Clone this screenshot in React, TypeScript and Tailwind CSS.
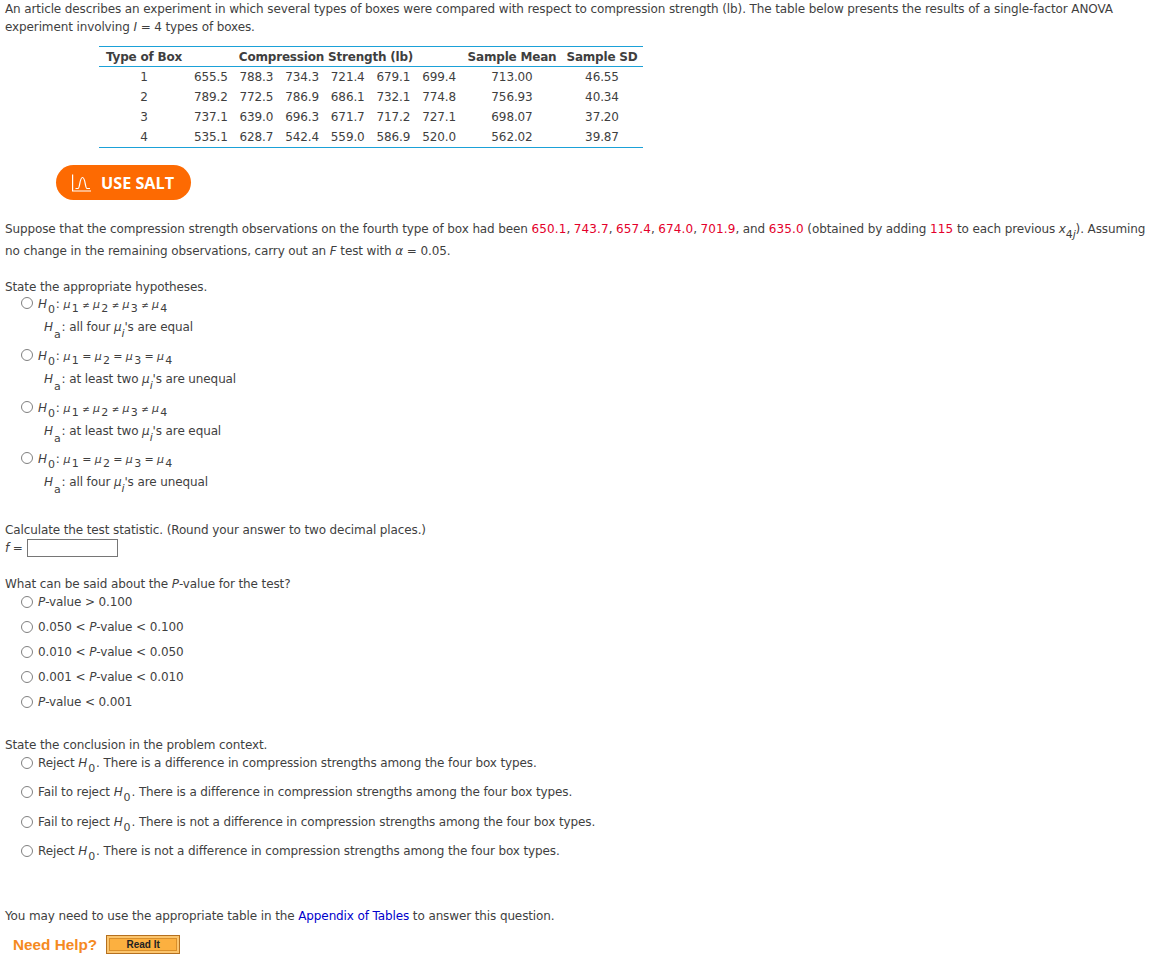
import React from 'react';

const rows = [
  ['1', '655.5', '788.3', '734.3', '721.4', '679.1', '699.4', '713.00', '46.55'],
  ['2', '789.2', '772.5', '786.9', '686.1', '732.1', '774.8', '756.93', '40.34'],
  ['3', '737.1', '639.0', '696.3', '671.7', '717.2', '727.1', '698.07', '37.20'],
  ['4', '535.1', '628.7', '542.4', '559.0', '586.9', '520.0', '562.02', '39.87'],
];

const Sub: React.FC<{ children: React.ReactNode }> = ({ children }) => (
  <sub className="text-[11px] not-italic bottom-[-5px]">{children}</sub>
);

const Radio: React.FC = () => (
  <span className="inline-block w-[12px] h-[12px] mr-[5px] shrink-0 rounded-full border border-[#808080] bg-white" />
);

const H0 = () => (
  <>
    <i>H</i>
    <sub className="text-[11px] bottom-[-5px] ml-[1px] mr-[1px]">0</sub>
  </>
);

const Mu: React.FC<{ n: string }> = ({ n }) => (
  <span className="text-[11px]">
    <i>μ</i>
    <sub className="text-[11px] bottom-[-4px] ml-[1.5px]">{n}</sub>
  </span>
);

const Op: React.FC<{ op: string }> = ({ op }) => (
  <span className="text-[11px]">
    {' '}
    <span className={op === '≠' ? 'text-[9px]' : 'text-[11px]'}>{op}</span>{' '}
  </span>
);

const Hypothesis: React.FC<{ op: string; alt: string; className?: string }> = ({ op, alt, className }) => (
  <div className={className}>
    <div className="flex items-center h-[18px] -mt-[2px] pl-[21px]">
      <Radio />
      <span className="whitespace-pre pt-[2px]">
        <H0 />: <Mu n="1" />
        <Op op={op} />
        <Mu n="2" />
        <Op op={op} />
        <Mu n="3" />
        <Op op={op} />
        <Mu n="4" />
      </span>
    </div>
    <div className="h-[18px] mt-[6px] pl-[44px] leading-[18px] whitespace-pre">
      <i>H</i>
      <sub className="text-[11px] bottom-[-7px] ml-[1px] mr-[1px]">a</sub>: {alt.split('|')[0]}
      <i>μ</i>
      <sub className="text-[11px] bottom-[-6px]">
        <i>i</i>
      </sub>
      {alt.split('|')[1]}
    </div>
  </div>
);

const Option: React.FC<{ children: React.ReactNode; className?: string }> = ({ children, className }) => (
  <div className={`flex items-center h-[18px] pl-[21px] whitespace-pre ${className ?? ''}`}>
    <Radio />
    <span>{children}</span>
  </div>
);

const Red: React.FC<{ children: React.ReactNode }> = ({ children }) => (
  <span className="text-[#e4002b] tracking-[0.1px]">{children}</span>
);

export default function App() {
  return (
    <div className="w-[1152px] h-[963px] overflow-hidden bg-white text-[#3f3f3f] text-[12px] tracking-[-0.115px] leading-[18px] font-['DejaVu_Sans',Verdana,sans-serif]">
      <div className="pl-[5px] pr-[30px]">
        <p className="whitespace-pre">An article describes an experiment in which several types of boxes were compared with respect to compression strength (lb). The table below presents the results of a single-factor ANOVA</p>
        <p className="whitespace-pre">experiment involving <i>I</i> = 4 types of boxes.</p>
      </div>

      <table className="ml-[99px] mt-[10px] w-[544px] table-fixed whitespace-nowrap border-y border-[#1ba1d8] border-separate border-spacing-0">
        <thead>
          <tr className="h-[20px]">
            <th className="w-[90px] text-center font-bold tracking-[-0.2px] border-b border-[#1ba1d8]">Type of Box</th>
            <th colSpan={6} className="w-[274px] text-center font-bold tracking-[-0.2px] border-b border-[#1ba1d8]">Compression Strength (lb)</th>
            <th className="w-[98px] text-center font-bold tracking-[-0.2px] border-b border-[#1ba1d8]">Sample Mean</th>
            <th className="w-[82px] text-center font-bold tracking-[-0.2px] border-b border-[#1ba1d8]">Sample SD</th>
          </tr>
        </thead>
        <tbody>
          {rows.map((r) => (
            <tr key={r[0]} className="h-[20px]">
              {r.map((c, i) => (
                <td key={i} className={i >= 1 && i <= 6 ? 'text-right pr-[7px]' : 'text-center'}>
                  {c}
                </td>
              ))}
            </tr>
          ))}
        </tbody>
      </table>

      <div className="ml-[56px] mt-[17px] w-[135px] h-[35px] rounded-full bg-[#fd6a02] text-white flex items-center pl-[16px] gap-[10px] text-[16.2px] tracking-normal font-bold font-['Open_Sans',sans-serif]">
        <svg width="19" height="18" viewBox="0 0 19 18" fill="none" stroke="#fff" strokeWidth="1.2">
          <path d="M0.600 0.500V17H19" />
          <path d="M3.500 14.500H6C8 14.500 7.500 3.500 10.500 3.500S13 14.500 15 14.500H18" />
        </svg>
        USE SALT
      </div>

      <div className="pl-[5px] mt-[18px] leading-[22px]">
        <p className="whitespace-pre">
          Suppose that the compression strength observations on the fourth type of box had been <Red>650.1</Red>, <Red>743.7</Red>, <Red>657.4</Red>, <Red>674.0</Red>, <Red>701.9</Red>, and <Red>635.0</Red> (obtained by adding <Red>115</Red> to each previous <i>x</i>
          <Sub>
            4<i>j</i>
          </Sub>
          ). Assuming
        </p>
        <p className="whitespace-pre">
          no change in the remaining observations, carry out an <i>F</i> test with <i>α</i> = 0.05.
        </p>
      </div>

      <p className="pl-[5px] mt-[16px] h-[18px]">State the appropriate hypotheses.</p>
      <Hypothesis op="≠" alt="all four |'s are equal" />
      <Hypothesis op="=" alt="at least two |'s are unequal" className="mt-[12px]" />
      <Hypothesis op="≠" alt="at least two |'s are equal" className="mt-[12px]" />
      <Hypothesis op="=" alt="all four |'s are unequal" className="mt-[11px]" />

      <p className="pl-[5px] mt-[30px] h-[18px]">Calculate the test statistic. (Round your answer to two decimal places.)</p>
      <div className="pl-[5px] flex items-center h-[18px]">
        <span className="whitespace-pre">
          <i>f</i> =
        </span>
        <span className="ml-[4px] w-[91px] h-[18px] border border-[#767676] bg-white" />
      </div>

      <p className="pl-[5px] mt-[18px] h-[18px]">
        What can be said about the <i>P</i>-value for the test?
      </p>
      <Option><i>P</i>-value &gt; 0.100</Option>
      <Option className="mt-[7px]">0.050 &lt; <i>P</i>-value &lt; 0.100</Option>
      <Option className="mt-[7px]">0.010 &lt; <i>P</i>-value &lt; 0.050</Option>
      <Option className="mt-[7px]">0.001 &lt; <i>P</i>-value &lt; 0.010</Option>
      <Option className="mt-[7px]"><i>P</i>-value &lt; 0.001</Option>

      <p className="pl-[5px] mt-[25px] h-[18px]">State the conclusion in the problem context.</p>
      <Option>Reject <H0 />. There is a difference in compression strengths among the four box types.</Option>
      <Option className="mt-[11px]">Fail to reject <H0 />. There is a difference in compression strengths among the four box types.</Option>
      <Option className="mt-[12px]">Fail to reject <H0 />. There is not a difference in compression strengths among the four box types.</Option>
      <Option className="mt-[11px]">Reject <H0 />. There is not a difference in compression strengths among the four box types.</Option>

      <p className="pl-[5px] mt-[47px] h-[18px]">
        You may need to use the appropriate table in the <span className="text-[#0000cc]">Appendix of Tables</span> to answer this question.
      </p>
      <div className="flex items-center ml-[13px] mt-[10px] tracking-normal">
        <span className="text-[15.3px] font-bold text-[#f58a1f] font-['Liberation_Sans',Arial,sans-serif]">Need Help?</span>
        <span className="ml-[9px] w-[74px] h-[19px] border border-[#b5701f] bg-[#fbc56e] p-[2px] flex">
          <span className="flex-1 flex items-center justify-center border border-[#d98f2a] bg-[#fcb040] text-[10px] font-bold text-[#222] font-['Liberation_Sans',Arial,sans-serif]">Read It</span>
        </span>
      </div>
    </div>
  );
}
